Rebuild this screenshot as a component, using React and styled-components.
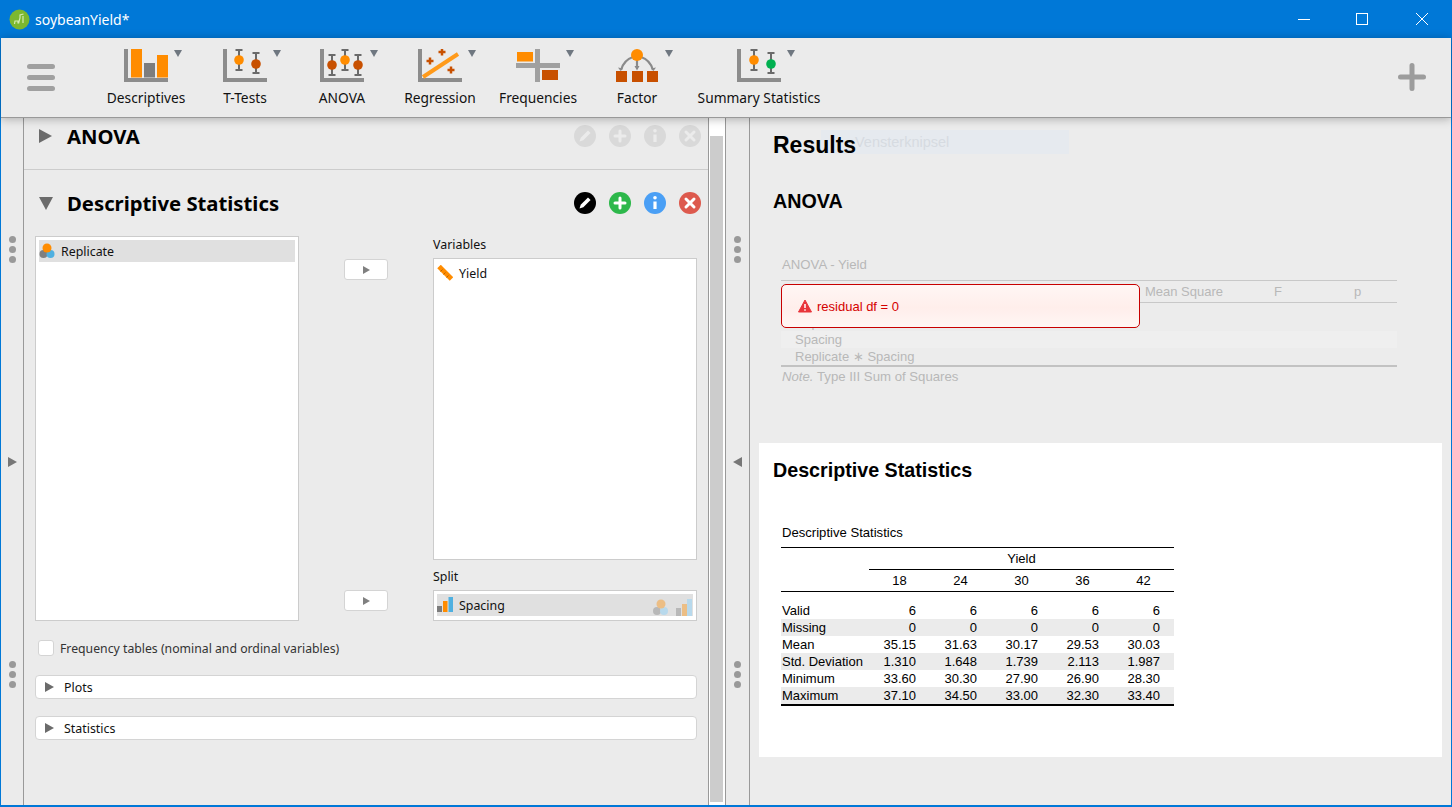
import React from 'react';
import styled, {createGlobalStyle} from 'styled-components';

const Global = createGlobalStyle`
  html, body { margin: 0; padding: 0; height: 100%; overflow: hidden; background: #ebebeb; }
  #root { height: 100%; }
  * { box-sizing: border-box; }
`;

const UI = `"Noto Sans", "DejaVu Sans", sans-serif`;
const REPORT = `"Liberation Sans", Arial, sans-serif`;

const Window = styled.div`
  height: 807px;
  display: flex;
  flex-direction: column;
  border-left: 1px solid #0078d7;
  border-right: 1px solid #0078d7;
  border-bottom: 2px solid #0078d7;
  font-family: ${UI};
  color: #111;
`;

const TitleBar = styled.div`
  height: 38px;
  margin: 0 -1px;
  flex: none;
  background: #0078d7;
  display: flex;
  align-items: center;
  padding-left: 9px;
  color: #fff;
  font-size: 14px;
`;

const Logo = styled.svg`
  width: 21px;
  height: 21px;
  margin-right: 5px;
`;

const WinButtons = styled.div`
  margin-left: auto;
  display: flex;
`;

const WinButton = styled.div`
  width: ${p => p.$w || 58}px;
  height: 38px;
  display: flex;
  align-items: center;
  justify-content: center;
`;

const Toolbar = styled.div`
  height: 80px;
  flex: none;
  display: flex;
  background: #ebebeb;
  border-bottom: 1px solid #999;
  box-shadow: 0 1px 9px rgba(0, 0, 0, 0.28);
  position: relative;
  z-index: 5;
`;

const Burger = styled.div`
  width: 94px;
  padding: 26px 0 0 26px;
  display: flex;
  flex-direction: column;
  gap: 6px;
  span {
    display: block;
    width: 28px;
    height: 5px;
    border-radius: 3px;
    background: #a0a0a0;
  }
`;

const ToolItem = styled.div`
  width: ${p => p.$w}px;
  display: flex;
  flex-direction: column;
  align-items: center;
  padding-top: 11px;
  font-size: 13.75px;
  white-space: nowrap;
`;

const ToolIcon = styled.div`
  position: relative;
  width: 44px;
  height: 33px;
  margin-bottom: 6px;
  svg { display: block; }
  &::after {
    content: '';
    position: absolute;
    left: 50px;
    top: 1px;
    border-left: 4.5px solid transparent;
    border-right: 4.5px solid transparent;
    border-top: 7px solid #6f7780;
  }
`;

const AddModule = styled.div`
  margin-left: auto;
  margin-right: 25px;
  align-self: center;
  width: 28px;
  height: 28px;
  position: relative;
  top: -1px;
`;

const Main = styled.div`
  flex: 1;
  min-height: 0;
  display: flex;
`;

const Handle = styled.div`
  width: ${p => p.$w}px;
  flex: none;
  border-right: 1px solid #999;
  display: flex;
  flex-direction: column;
  align-items: center;
  justify-content: space-between;
  padding: 118px 0 117px;
  background: #ebebeb;
`;

const Dots = styled.div`
  display: flex;
  flex-direction: column;
  gap: 3px;
  i {
    display: block;
    width: 7px;
    height: 7px;
    border-radius: 50%;
    background: #999;
  }
`;

const HandleArrow = styled.div`
  width: 0;
  height: 0;
  border-top: 5px solid transparent;
  border-bottom: 5px solid transparent;
  ${p => p.$left ? 'border-right: 9px solid #777;' : 'border-left: 9px solid #777;'}
`;

const Analyses = styled.div`
  width: 684px;
  flex: none;
  background: #ebebeb;
`;

const CollapsedAnalysis = styled.div`
  height: 52px;
  border-bottom: 1px solid #ccc;
`;

const AnalysisHeader = styled.div`
  height: 36px;
  display: flex;
  align-items: center;
  padding: 0 7px 0 15px;
  margin-top: ${p => p.$top || 0}px;
`;

const Title = styled.div`
  font-size: 20.3px;
  font-weight: 700;
  color: #000;
  margin-left: 14px;
`;

const Triangle = styled.div`
  width: 0;
  height: 0;
  ${p => p.$open
    ? 'border-left: 7px solid transparent; border-right: 7px solid transparent; border-top: 13px solid #6b6b6b;'
    : 'border-top: 7px solid transparent; border-bottom: 7px solid transparent; border-left: 13px solid #6b6b6b; margin-right: 1px;'}
`;

const Actions = styled.div`
  margin-left: auto;
  display: flex;
  gap: 13px;
`;

const ActionDot = styled.div`
  width: 22px;
  height: 22px;
  border-radius: 50%;
  background: ${p => p.$color};
  svg { display: block; }
`;

const FormBody = styled.div`
  margin: 15px 11px 0;
`;

const VarGrid = styled.div`
  height: 385px;
  display: grid;
  grid-template-columns: 264px 134px 264px;
`;

const ListBox = styled.div`
  background: #fff;
  border: 1px solid #ccc;
  padding: 3px;
  ${p => p.$grow && 'flex: 1;'}
  ${p => p.$h && `height: ${p.$h}px;`}
`;

const VarRow = styled.div`
  height: 22px;
  display: flex;
  align-items: center;
  gap: 6px;
  font-size: 12.4px;
  position: relative;
  background: ${p => p.$selected ? '#e0e0e0' : 'transparent'};
  svg { flex: none; }
`;

const GhostIcons = styled.svg`
  position: absolute;
  right: 0;
  top: 5px;
  opacity: 0.4;
`;

const AssignColumn = styled.div`
  display: flex;
  flex-direction: column;
  align-items: center;
  justify-content: space-between;
  padding: 23px 0 10px;
`;

const AssignButton = styled.div`
  width: 44px;
  height: 21px;
  background: #fff;
  border: 1px solid #d4d4d4;
  border-radius: 3px;
  display: flex;
  align-items: center;
  justify-content: center;
  &::before {
    content: '';
    border-top: 4px solid transparent;
    border-bottom: 4px solid transparent;
    border-left: 7px solid #808080;
  }
`;

const TargetColumn = styled.div`
  display: flex;
  flex-direction: column;
`;

const BoxLabel = styled.div`
  height: 22px;
  padding-bottom: 5px;
  display: flex;
  align-items: center;
  font-size: 12.4px;
  margin-top: ${p => p.$top || 0}px;
`;

const CheckRow = styled.div`
  display: flex;
  align-items: center;
  gap: 6px;
  margin: 19px 0 19px 3px;
  height: 16px;
  font-size: 12.25px;
  color: #333;
`;

const CheckBox = styled.div`
  width: 16px;
  height: 16px;
  background: #fff;
  border: 1px solid #d4d4d4;
  border-radius: 3px;
`;

const Expander = styled.div`
  height: 24px;
  margin-bottom: 17px;
  background: #fff;
  border: 1px solid #d4d4d4;
  border-radius: 4px;
  display: flex;
  align-items: center;
  padding-left: 9px;
  gap: 10px;
  font-size: 12.4px;
  &::before {
    content: '';
    border-top: 5px solid transparent;
    border-bottom: 5px solid transparent;
    border-left: 9px solid #6b6b6b;
  }
`;

const ScrollBar = styled.div`
  width: 18px;
  flex: none;
  border-left: 1px solid #999;
  border-right: 1px solid #999;
  padding: 1px 1px 3px;
  display: flex;
  flex-direction: column;
  background: #fff;
  &::before {
    content: '';
    height: 17px;
    flex: none;
  }
  &::after {
    content: '';
    flex: 1;
    background: #ccc;
    margin-right: 1px;
  }
`;

const Results = styled.div`
  flex: 1;
  min-width: 0;
  background: #ececec;
  position: relative;
  font-family: ${REPORT};
`;

const Snip = styled.div`
  position: absolute;
  left: 71px;
  top: 12px;
  width: 248px;
  height: 24px;
  background: #e6eaef;
  padding-left: 34px;
  font-size: 14.5px;
  line-height: 24px;
  color: #d6dbe1;
`;

const ResultsTitle = styled.h1`
  position: relative;
  margin: 12px 0 0 23px;
  font-size: 23px;
  line-height: 30px;
  font-weight: 700;
  color: #000;
`;

const SectionTitle = styled.h2`
  margin: ${p => p.$top}px 0 0 ${p => p.$left}px;
  font-size: 19.7px;
  line-height: 30px;
  font-weight: 700;
  color: #000;
`;

const AnovaBlock = styled.div`
  position: relative;
  margin: 40px 0 0 31px;
  width: 616px;
  font-size: 13.2px;
  color: #b8b8b8;
`;

const Caption = styled.div`
  height: 24px;
  line-height: 17px;
  padding: ${p => p.$dark ? '1px' : '0'} 0 0 1px;
  color: ${p => p.$dark ? '#000' : '#b8b8b8'};
`;

const FadedTable = styled.table`
  width: 100%;
  border-collapse: collapse;
  table-layout: fixed;
  border-top: 1px solid #c8c8c8;
  border-bottom: 2px solid #c2c2c2;
  font-size: 13px;
  color: #b8b8b8;
  th { font-weight: 400; height: 22px; border-bottom: 1px solid #c8c8c8; padding: 0; }
  td { height: 17px; padding: 0 0 0 14px; }
`;

const FadedRow = styled.tr`
  background: ${p => p.$band ? '#efefef' : 'transparent'};
`;

const Spacer = styled.tr`
  height: ${p => p.$h}px;
`;

const Note = styled.div`
  line-height: 17px;
  margin-top: 1px;
  padding-left: 1px;
  em { font-style: italic; }
`;

const ErrorBox = styled.div`
  position: absolute;
  left: 0;
  top: 28px;
  width: 359px;
  height: 44px;
  border: 1px solid #c80000;
  border-radius: 5px;
  background: linear-gradient(#fff6f4, #ffeeeb 55%, #fff6f4);
  display: flex;
  align-items: center;
  gap: 5px;
  padding-left: 16px;
  color: #d40000;
  font-size: 13px;
`;

const WhiteSection = styled.div`
  margin: 58px 9px 0;
  height: 314px;
  background: #fff;
  padding: 12px 14px 0;
`;

const StatsBlock = styled.div`
  margin: 38px 0 0 8px;
  width: 393px;
  font-size: 13.1px;
`;

const StatsTable = styled.table`
  width: 100%;
  border-collapse: collapse;
  table-layout: fixed;
  border-top: 1px solid #000;
  border-bottom: 2px solid #000;
  font-size: 13px;
  color: #000;
  th { font-weight: 400; height: 22px; padding: 0; }
  td { height: 17px; padding: 0 14px 0 1px; text-align: right; white-space: nowrap; }
  td:first-child { text-align: left; padding-right: 0; }
`;

const GroupHead = styled.th`
  border-bottom: 1px solid #000;
`;

const ColHead = styled.tr`
  th { border-bottom: 1px solid #000; }
`;

const StatsRow = styled.tr`
  background: ${p => p.$band ? '#ebebeb' : 'transparent'};
`;

const axis = <path d="M2 0V31H44" fill="none" stroke="#8c8c8c" strokeWidth="4" />;

const ErrorBar = ({x, top, dot, color}) => (
  <g>
    <path
      d={`M${x - 3.5} ${top}h7M${x} ${top}v20M${x - 3.5} ${top + 20}h7`}
      stroke="#6a6a6a"
      strokeWidth="2"
      fill="none"
    />
    <circle cx={x} cy={dot} r="4.8" fill={color} />
  </g>
);

const ORANGE = '#ff8c00';
const RUST = '#c85000';

const icons = {
  descriptives: (
    <>
      {axis}
      <rect x="7" y="0" width="11" height="28.500" fill={ORANGE} />
      <rect x="20" y="14" width="11" height="14.500" fill="#7d7d7d" />
      <rect x="33" y="6" width="11" height="22.500" fill={ORANGE} />
    </>
  ),
  ttests: (
    <>
      {axis}
      <ErrorBar x={16} top={1} dot={11} color={ORANGE} />
      <ErrorBar x={33} top={4} dot={15} color={RUST} />
    </>
  ),
  anova: (
    <>
      {axis}
      <ErrorBar x={12} top={6} dot={16} color={RUST} />
      <ErrorBar x={25} top={1} dot={11} color={ORANGE} />
      <ErrorBar x={38} top={6} dot={16} color={RUST} />
    </>
  ),
  regression: (
    <>
      {axis}
      <path d="M5 28L40 5" stroke="#ff9a1a" strokeWidth="4" />
      <path d="M8.500 12h7M12 8.500v7M20.500 3h7M24 -0.500v7M29.500 21h7M33 17.500v7" stroke={RUST} strokeWidth="2.500" fill="none" />
    </>
  ),
  frequencies: (
    <>
      <path d="M0 16.500H44M21.500 0V33" stroke="#a0a0a0" strokeWidth="5" />
      <rect x="1" y="3" width="16" height="9.500" fill={ORANGE} />
      <rect x="26" y="21" width="16" height="10" fill={RUST} />
    </>
  ),
  factor: (
    <>
      <path d="M18 8C12 10 8 14 6 21M22 10V19M26 8C32 10 36 14 38 21" stroke="#8a8a8a" strokeWidth="2.200" fill="none" />
      <path d="M19.500 17h5L22 21.500ZM3 18.500l5 1-2.500 2.500ZM41 18.500l-5 1 2.500 2.500Z" fill="#8a8a8a" />
      <circle cx="22" cy="6" r="6" fill={ORANGE} />
      <rect x="1" y="22" width="11" height="11" fill={RUST} />
      <rect x="17" y="22" width="11" height="11" fill={RUST} />
      <rect x="32" y="22" width="11" height="11" fill={RUST} />
    </>
  ),
  summary: (
    <>
      {axis}
      <ErrorBar x={17} top={1} dot={11} color={ORANGE} />
      <ErrorBar x={34} top={4} dot={15} color="#00b050" />
    </>
  ),
};

const tools = [
  {label: 'Descriptives', icon: 'descriptives', w: 102},
  {label: 'T-Tests', icon: 'ttests', w: 96},
  {label: 'ANOVA', icon: 'anova', w: 98},
  {label: 'Regression', icon: 'regression', w: 98},
  {label: 'Frequencies', icon: 'frequencies', w: 98},
  {label: 'Factor', icon: 'factor', w: 100},
  {label: 'Summary Statistics', icon: 'summary', w: 144},
];

const Glyph = ({kind, color}) => {
  const paths = {
    edit: <path d="M5.500 16.500l1.200-3.800 7.300-7.300 2.600 2.600-7.300 7.300z" fill={color} />,
    add: <path d="M6 11H16M11 6V16" stroke={color} strokeWidth="3" strokeLinecap="round" />,
    info: (
      <>
        <circle cx="11" cy="5.800" r="1.800" fill={color} />
        <path d="M11 9.500V17" stroke={color} strokeWidth="3.200" />
      </>
    ),
    close: <path d="M7 7L15 15M15 7L7 15" stroke={color} strokeWidth="3" strokeLinecap="round" />,
  };
  return <svg width="22" height="22" viewBox="0 0 22 22">{paths[kind]}</svg>;
};

const ActionSet = ({faded}) => (
  <Actions>
    <ActionDot $color={faded ? '#d9d9d9' : '#000'}><Glyph kind="edit" color={faded ? '#ebebeb' : '#fff'} /></ActionDot>
    <ActionDot $color={faded ? '#d9d9d9' : '#2db84b'}><Glyph kind="add" color={faded ? '#ebebeb' : '#fff'} /></ActionDot>
    <ActionDot $color={faded ? '#d9d9d9' : '#4a9ff5'}><Glyph kind="info" color={faded ? '#ebebeb' : '#fff'} /></ActionDot>
    <ActionDot $color={faded ? '#d9d9d9' : '#dd5a4e'}><Glyph kind="close" color={faded ? '#ebebeb' : '#fff'} /></ActionDot>
  </Actions>
);

const NominalIcon = () => (
  <svg width="16" height="16" viewBox="0 0 16 16">
    <circle cx="4.500" cy="11" r="4" fill="#7f7f7f" />
    <circle cx="11.500" cy="11" r="4" fill="#4fb0e0" />
    <circle cx="8" cy="5" r="4.500" fill={ORANGE} />
  </svg>
);

const OrdinalIcon = () => (
  <svg width="16" height="16" viewBox="0 0 16 16">
    <rect x="0" y="9" width="5" height="6" fill="#7d7d7d" />
    <rect x="6" y="4" width="4.500" height="11" fill={ORANGE} />
    <rect x="11.500" y="0" width="4.500" height="15" fill="#4fb0e0" />
  </svg>
);

const ScaleIcon = () => (
  <svg width="16" height="16" viewBox="0 0 16 16">
    <path d="M2 1.500L14.500 14" stroke={ORANGE} strokeWidth="5" />
    <path d="M3.500 6.500L5.500 4.500M6.500 9.500L8.500 7.500M9.500 12.500L11.500 10.500" stroke="#b86400" strokeWidth="1" />
  </svg>
);

const cols = [18, 24, 30, 36, 42];

const stats = [
  ['Valid', '6', '6', '6', '6', '6'],
  ['Missing', '0', '0', '0', '0', '0'],
  ['Mean', '35.15', '31.63', '30.17', '29.53', '30.03'],
  ['Std. Deviation', '1.310', '1.648', '1.739', '2.113', '1.987'],
  ['Minimum', '33.60', '30.30', '27.90', '26.90', '28.30'],
  ['Maximum', '37.10', '34.50', '33.00', '32.30', '33.40'],
];

const App = () => (
  <Window>
    <Global />
    <TitleBar>
      <Logo viewBox="0 0 21 21">
        <circle cx="10.500" cy="10.500" r="10" fill="#7cb82f" />
        <path d="M5.500 15l.5-3h3v2.500M9.500 14.500L11 9V6l3.500-1M14 7v7" stroke="#d6ebb4" strokeWidth="1.200" fill="none" />
      </Logo>
      soybeanYield*
      <WinButtons>
        <WinButton>
          <svg width="12" height="12" viewBox="0 0 12 12"><path d="M0 6.500H12" stroke="#fff" /></svg>
        </WinButton>
        <WinButton>
          <svg width="12" height="12" viewBox="0 0 12 12"><rect x="0.500" y="0.500" width="11" height="11" fill="none" stroke="#fff" /></svg>
        </WinButton>
        <WinButton $w={61}>
          <svg width="12" height="12" viewBox="0 0 12 12"><path d="M0 0L12 12M12 0L0 12" stroke="#fff" /></svg>
        </WinButton>
      </WinButtons>
    </TitleBar>

    <Toolbar>
      <Burger><span /><span /><span /></Burger>
      {tools.map(t => (
        <ToolItem key={t.label} $w={t.w}>
          <ToolIcon>
            <svg width="44" height="33" viewBox="0 0 44 33">{icons[t.icon]}</svg>
          </ToolIcon>
          {t.label}
        </ToolItem>
      ))}
      <AddModule>
        <svg width="28" height="28" viewBox="0 0 28 28">
          <path d="M2.500 14H25.500M14 2.500V25.500" stroke="#9c9c9c" strokeWidth="5" strokeLinecap="round" />
        </svg>
      </AddModule>
    </Toolbar>

    <Main>
      <Handle $w={23}>
        <Dots><i /><i /><i /></Dots>
        <HandleArrow />
        <Dots><i /><i /><i /></Dots>
      </Handle>

      <Analyses>
        <CollapsedAnalysis>
          <AnalysisHeader>
            <Triangle />
            <Title>ANOVA</Title>
            <ActionSet faded />
          </AnalysisHeader>
        </CollapsedAnalysis>
        <AnalysisHeader $top={15}>
          <Triangle $open />
          <Title>Descriptive Statistics</Title>
          <ActionSet />
        </AnalysisHeader>

        <FormBody>
          <VarGrid>
            <ListBox>
              <VarRow $selected><NominalIcon />Replicate</VarRow>
            </ListBox>
            <AssignColumn>
              <AssignButton />
              <AssignButton />
            </AssignColumn>
            <TargetColumn>
              <BoxLabel>Variables</BoxLabel>
              <ListBox $grow>
                <VarRow><ScaleIcon />Yield</VarRow>
              </ListBox>
              <BoxLabel $top={8}>Split</BoxLabel>
              <ListBox $h={31}>
                <VarRow $selected>
                  <OrdinalIcon />Spacing
                  <GhostIcons width="40" height="17" viewBox="0 0 40 17">
                    <circle cx="4" cy="12" r="4" fill="#7f7f7f" />
                    <circle cx="11" cy="12" r="4" fill="#7fd0ff" />
                    <circle cx="8" cy="5" r="4.500" fill={ORANGE} />
                    <rect x="23" y="9" width="5" height="8" fill="#7d7d7d" />
                    <rect x="29" y="5" width="5" height="12" fill={ORANGE} />
                    <rect x="34" y="0" width="5" height="17" fill="#7fd0ff" />
                  </GhostIcons>
                </VarRow>
              </ListBox>
            </TargetColumn>
          </VarGrid>

          <CheckRow><CheckBox />Frequency tables (nominal and ordinal variables)</CheckRow>
          <Expander>Plots</Expander>
          <Expander>Statistics</Expander>
        </FormBody>
      </Analyses>

      <ScrollBar />

      <Handle $w={24}>
        <Dots><i /><i /><i /></Dots>
        <HandleArrow $left />
        <Dots><i /><i /><i /></Dots>
      </Handle>

      <Results>
        <Snip>Vensterknipsel</Snip>
        <ResultsTitle>Results</ResultsTitle>
        <SectionTitle $top={26} $left={23}>ANOVA</SectionTitle>

        <AnovaBlock>
          <Caption>ANOVA - Yield</Caption>
          <FadedTable>
            <colgroup>
              <col />
              <col width="108" />
              <col width="80" />
              <col width="79" />
            </colgroup>
            <thead>
              <tr>
                <th>Cases</th>
                <th>Mean Square</th>
                <th>F</th>
                <th>p</th>
              </tr>
            </thead>
            <tbody>
              <Spacer $h={11} />
              <FadedRow><td colSpan="4">Replicate</td></FadedRow>
              <FadedRow $band><td colSpan="4">Spacing</td></FadedRow>
              <FadedRow><td colSpan="4">Replicate ∗ Spacing</td></FadedRow>
              <Spacer $h={1} />
            </tbody>
          </FadedTable>
          <Note><em>Note.</em> Type III Sum of Squares</Note>
          <ErrorBox>
            <svg width="14" height="14" viewBox="0 0 14 14">
              <path d="M7 1L13.500 13H0.500Z" fill="#e8353b" stroke="#e8353b" strokeLinejoin="round" />
              <path d="M7 5V9M7 10.200V11.800" stroke="#fff" strokeWidth="1.500" />
            </svg>
            residual df = 0
          </ErrorBox>
        </AnovaBlock>

        <WhiteSection>
          <SectionTitle $top={0} $left={0}>Descriptive Statistics</SectionTitle>
          <StatsBlock>
            <Caption $dark>Descriptive Statistics</Caption>
            <StatsTable>
              <colgroup>
                <col width="88" />
                {cols.map(c => <col key={c} width="61" />)}
              </colgroup>
              <thead>
                <tr>
                  <th />
                  <GroupHead colSpan="5">Yield</GroupHead>
                </tr>
                <ColHead>
                  <th />
                  {cols.map(c => <th key={c}>{c}</th>)}
                </ColHead>
              </thead>
              <tbody>
                <Spacer $h={11} />
                {stats.map((row, i) => (
                  <StatsRow key={row[0]} $band={i % 2 === 1}>
                    {row.map((cell, j) => <td key={j}>{cell}</td>)}
                  </StatsRow>
                ))}
                <Spacer $h={1} />
              </tbody>
            </StatsTable>
          </StatsBlock>
        </WhiteSection>
      </Results>
    </Main>
  </Window>
);

export default App;
